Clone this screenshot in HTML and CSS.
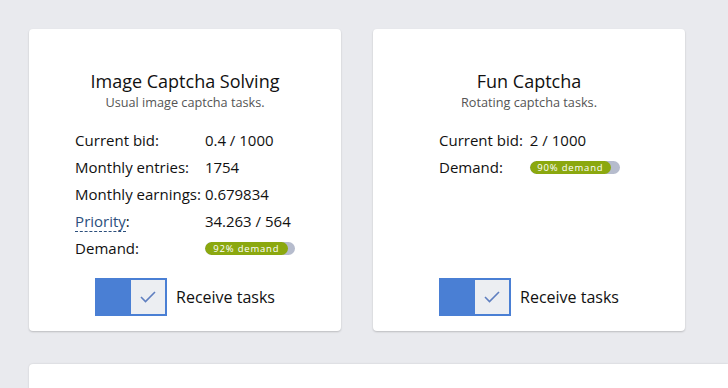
FILE: index.html
```html
<!DOCTYPE html>
<html lang="en">
<head>
  <meta charset="UTF-8" />
  <title>Tasks</title>
  <link rel="stylesheet" href="styles.css">
</head>
<body>
  <section class="cards">
    <div class="card">
      <h2>Image Captcha Solving</h2>
      <p class="subtitle">Usual image captcha tasks.</p>
      <div class="stats">
        <span>Current bid:</span><span>0.4 / 1000</span>
        <span>Monthly entries:</span><span>1754</span>
        <span>Monthly earnings:</span><span>0.679834</span>
        <span><span class="hint">Priority</span>:</span><span>34.263 / 564</span>
        <span>Demand:</span>
        <span class="demand"><span class="demand-fill" style="width: 92%">92% demand</span></span>
      </div>
      <label class="toggle">
        <span class="switch">
          <span class="knob">
            <svg width="16" height="12" viewBox="0 0 16 12"><polyline points="1,6 5.5,10.5 15,1" fill="none" stroke="#5f7fc0" stroke-width="1.6"/></svg>
          </span>
        </span>
        Receive tasks
      </label>
    </div>

    <div class="card">
      <h2>Fun Captcha</h2>
      <p class="subtitle">Rotating captcha tasks.</p>
      <div class="stats stats-wide">
        <span>Current bid:</span><span>2 / 1000</span>
        <span>Demand:</span>
        <span class="demand"><span class="demand-fill" style="width: 90%">90% demand</span></span>
      </div>
      <label class="toggle">
        <span class="switch">
          <span class="knob">
            <svg width="16" height="12" viewBox="0 0 16 12"><polyline points="1,6 5.5,10.5 15,1" fill="none" stroke="#5f7fc0" stroke-width="1.6"/></svg>
          </span>
        </span>
        Receive tasks
      </label>
    </div>
  </section>

  <section class="panel"></section>
</body>
</html>
```

FILE: styles.css
```css
body {
  font-family: 'Open Sans', 'Noto Sans', sans-serif;
  margin: 0;
  padding: 29px 0 0 29px;
  background: #e9eaee;
  color: #111;
  overflow: hidden;
}

.cards {
  display: flex;
  gap: 32px;
}

.card {
  width: 312px;
  height: 302px;
  box-sizing: border-box;
  background: white;
  border-radius: 4px;
  box-shadow: 0 1px 2px rgba(0,0,0,0.2);
  padding: 40px 0 0;
  display: flex;
  flex-direction: column;
  align-items: center;
}

.card h2 {
  margin: 0;
  font-size: 18px;
  font-weight: 400;
  line-height: 24px;
}

.subtitle {
  margin: 0;
  font-size: 12.7px;
  color: #555;
  line-height: 18px;
}

.stats {
  display: grid;
  grid-template-columns: auto auto;
  column-gap: 4px;
  margin-top: 16px;
  font-size: 15px;
  line-height: 27px;
  align-items: center;
  white-space: nowrap;
}

.stats-wide {
  width: 180px;
  grid-template-columns: max-content 1fr;
  column-gap: 7px;
}

.hint {
  color: #2c4f7c;
  border-bottom: 1px dashed #2c4f7c;
}

.demand {
  justify-self: end;
  display: block;
  width: 90px;
  height: 13px;
  border-radius: 7px;
  background: #b6bccd;
  overflow: hidden;
}

.demand-fill {
  display: block;
  height: 100%;
  background: #8ba80f;
  border-radius: 7px;
  color: white;
  font-size: 9.5px;
  line-height: 13px;
  letter-spacing: 0.8px;
  text-align: center;
}

.toggle {
  margin-top: auto;
  margin-bottom: 15px;
  display: flex;
  align-items: center;
  gap: 9px;
  font-size: 16px;
}

.switch {
  display: flex;
  justify-content: flex-end;
  width: 72px;
  height: 38px;
  box-sizing: border-box;
  padding: 2px;
  background: #4a7fd4;
}

.knob {
  width: 34px;
  background: #eceef2;
  display: flex;
  align-items: center;
  justify-content: center;
}

.panel {
  margin-top: 33px;
  height: 60px;
  background: white;
  border-radius: 4px 0 0 0;
  box-shadow: 0 0 2px rgba(0,0,0,0.15);
}
```
